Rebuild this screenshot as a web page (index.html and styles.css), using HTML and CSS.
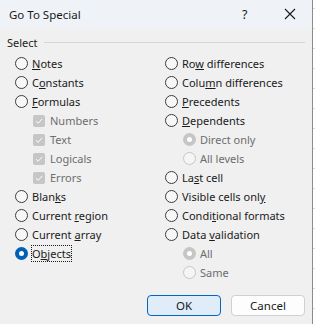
FILE: index.html
```html
<!DOCTYPE html>
<html>
<head>
    <title>Go To Special</title>
    <link rel="stylesheet" href="styles.css">
</head>
<body>
    <div class="sheet">
        <div class="dialog">
            <div class="titlebar">
                <span class="title">Go To Special</span>
                <span class="help">?</span>
                <span class="close">
                    <svg width="12" height="12" viewBox="0 0 12 12"><path d="M1 1 L11 11 M11 1 L1 11" stroke="#1a1a1a" stroke-width="1.1" fill="none"/></svg>
                </span>
            </div>

            <div class="group">
                <div class="group-head"><span>Select</span><div class="rule"></div></div>
                <div class="cols">
                    <div class="col">
                        <div class="opt"><span class="radio"></span><span><u>N</u>otes</span></div>
                        <div class="opt"><span class="radio"></span><span>C<u>o</u>nstants</span></div>
                        <div class="opt"><span class="radio"></span><span><u>F</u>ormulas</span></div>
                        <div class="opt sub off"><span class="check"><svg width="12" height="12" viewBox="0 0 12 12"><path d="M3 6.2 L5.2 8.3 L9.2 3.8" stroke="#fff" stroke-width="1" fill="none"/></svg></span><span>Numbers</span></div>
                        <div class="opt sub off"><span class="check"><svg width="12" height="12" viewBox="0 0 12 12"><path d="M3 6.2 L5.2 8.3 L9.2 3.8" stroke="#fff" stroke-width="1" fill="none"/></svg></span><span>Text</span></div>
                        <div class="opt sub off"><span class="check"><svg width="12" height="12" viewBox="0 0 12 12"><path d="M3 6.2 L5.2 8.3 L9.2 3.8" stroke="#fff" stroke-width="1" fill="none"/></svg></span><span>Logicals</span></div>
                        <div class="opt sub off"><span class="check"><svg width="12" height="12" viewBox="0 0 12 12"><path d="M3 6.2 L5.2 8.3 L9.2 3.8" stroke="#fff" stroke-width="1" fill="none"/></svg></span><span>Errors</span></div>
                        <div class="opt"><span class="radio"></span><span>Blan<u>k</u>s</span></div>
                        <div class="opt"><span class="radio"></span><span>Current <u>r</u>egion</span></div>
                        <div class="opt"><span class="radio"></span><span>Current <u>a</u>rray</span></div>
                        <div class="opt"><span class="radio on"></span><span class="focus">O<u>b</u>jects</span></div>
                    </div>
                    <div class="col">
                        <div class="opt"><span class="radio"></span><span>Ro<u>w</u> differences</span></div>
                        <div class="opt"><span class="radio"></span><span>Colu<u>m</u>n differences</span></div>
                        <div class="opt"><span class="radio"></span><span><u>P</u>recedents</span></div>
                        <div class="opt"><span class="radio"></span><span><u>D</u>ependents</span></div>
                        <div class="opt sub off"><span class="radio on"></span><span>Direct only</span></div>
                        <div class="opt sub off"><span class="radio"></span><span>All levels</span></div>
                        <div class="opt"><span class="radio"></span><span>La<u>s</u>t cell</span></div>
                        <div class="opt"><span class="radio"></span><span>Visible cells onl<u>y</u></span></div>
                        <div class="opt"><span class="radio"></span><span>Condi<u>t</u>ional formats</span></div>
                        <div class="opt"><span class="radio"></span><span>Data <u>v</u>alidation</span></div>
                        <div class="opt sub off"><span class="radio on"></span><span>All</span></div>
                        <div class="opt sub off"><span class="radio"></span><span>Same</span></div>
                    </div>
                </div>
            </div>

            <div class="buttons">
                <button class="button primary">OK</button>
                <button class="button">Cancel</button>
            </div>
        </div>
    </div>
</body>
</html>
```
FILE: styles.css
```css
body {
    margin: 0;
    padding: 0;
    font-family: "Segoe UI", "Noto Sans", sans-serif;
    font-size: 11px;
    color: #1a1a1a;
    background: #ffffff;
}
.sheet {
    width: 315px;
    height: 324px;
    background-color: #ffffff;
    background-image: linear-gradient(#d9d9d9 1px, transparent 1px);
    background-size: 100% 20px;
    background-position: 0 8px;
}
.dialog {
    width: 313px;
    height: 324px;
    background: #f0f0f0;
    border-right: 1px solid #8c8c8c;
    box-sizing: border-box;
    display: flex;
    flex-direction: column;
}
.titlebar {
    height: 28px;
    flex: none;
    background: #eff3f8;
    display: flex;
    align-items: center;
    padding-left: 9px;
}
.title {
    flex: 1;
    font-size: 11.5px;
}
.help {
    width: 14px;
    margin-right: 28px;
    font-size: 12.5px;
}
.close {
    width: 12px;
    margin-right: 16px;
    display: flex;
}
.group {
    padding: 6px 7px 0 7px;
}
.group-head {
    display: flex;
    align-items: center;
    height: 17px;
}
.rule {
    flex: 1;
    height: 1px;
    background: #d5d5d5;
    margin-left: 6px;
}
.cols {
    display: grid;
    grid-template-columns: 150px 1fr;
    padding-left: 8px;
    padding-top: 3px;
}
.opt {
    height: 19px;
    display: flex;
    align-items: center;
    gap: 4px;
    white-space: nowrap;
}
.opt.sub {
    padding-left: 18px;
}
.off {
    color: #6d6d6d;
}
.radio {
    width: 11px;
    height: 11px;
    border: 1px solid #3c3c3c;
    border-radius: 50%;
    background: #f7f7f7;
    flex: none;
}
.radio.on {
    width: 5px;
    height: 5px;
    border: 4px solid #005fb8;
    background: #ffffff;
}
.off .radio {
    border-color: #c6c6c6;
    background: #f5f5f5;
}
.off .radio.on {
    border-color: #c6c6c6;
    background: #ffffff;
}
.check {
    width: 12px;
    height: 12px;
    border-radius: 2px;
    background: #c6c6c6;
    display: flex;
    flex: none;
    margin-right: 1px;
}
.focus {
    outline: 1px dotted #1a1a1a;
    outline-offset: 0;
    line-height: 15px;
}
.buttons {
    margin-top: auto;
    display: flex;
    justify-content: flex-end;
    gap: 10px;
    padding: 0 7px 8px 0;
}
.button {
    width: 74px;
    height: 21px;
    background: #fdfdfd;
    border: 1px solid #d0d0d0;
    border-radius: 4px;
    font-family: inherit;
    font-size: 11.5px;
    color: #1a1a1a;
    padding: 0;
}
.button.primary {
    background: #e0ecf8;
    border-color: #0067c0;
}
```
